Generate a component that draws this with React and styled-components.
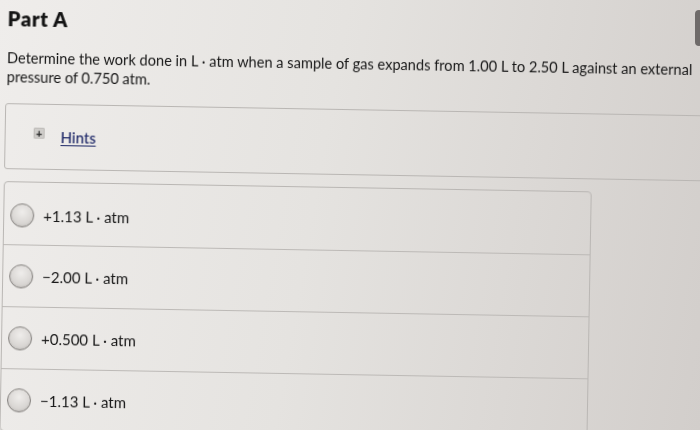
import React from 'react'
import styled, { createGlobalStyle } from 'styled-components'

const GlobalStyle = createGlobalStyle`
  html, body {
    margin: 0;
    height: 100%;
    overflow: hidden;
  }
  body {
    background: linear-gradient(100deg, #efedeb 0%, #e5e3e0 45%, #d2cecb 100%);
    font-family: Lato, "Open Sans", sans-serif;
    color: #1d1d1d;
  }
`

const choices = [
  '+1.13 L · atm',
  '−2.00 L · atm',
  '+0.500 L · atm',
  '−1.13 L · atm',
]

function App() {
  return (
    <>
      <GlobalStyle />
      <Scroll />
      <Page>
        <Title>Part A</Title>
        <Question>
          Determine the work done in L · atm when a sample of gas expands from 1.00 L to 2.50 L against an external
          <br />
          pressure of 0.750 atm.
        </Question>
        <HintBox>
          <PlusIcon>+</PlusIcon>
          <HintLink>Hints</HintLink>
        </HintBox>
        <ChoiceList>
          {choices.map((c, i) => (
            <Choice key={i} $first={i === 0}>
              <Radio />
              <span>{c}</span>
            </Choice>
          ))}
        </ChoiceList>
      </Page>
    </>
  )
}

export default App

// the whole sheet sits at a slight tilt
const Page = styled.div`
  width: 720px;
  padding: 7px 0 0 8px;
  transform: rotate(1deg);
  transform-origin: 0 0;
`

const Scroll = styled.div`
  position: fixed;
  right: -3px;
  top: 10px;
  width: 8px;
  height: 36px;
  border-radius: 4px;
  background: #6f6b6a;
`

const Title = styled.h2`
  margin: 0;
  font-size: 20px;
  font-weight: 800;
  letter-spacing: 0.7px;
  line-height: 22px;
  color: #141414;
`

const Question = styled.p`
  margin: 19px 0 0;
  width: 720px;
  white-space: nowrap;
  font-size: 14.6px;
  line-height: 19px;
  color: #171717;
`

const HintBox = styled.div`
  margin: 17px 0 0 -1px;
  height: 66px;
  width: 720px;
  box-sizing: border-box;
  border: 1px solid #b9b6b3;
  border-radius: 3px;
  display: flex;
  align-items: center;
  padding: 0 0 0 28px;
`

const PlusIcon = styled.span`
  width: 9px;
  height: 9px;
  border-radius: 1px;
  background: #cfcdca;
  border: 1px solid #bdbab7;
  font-size: 11px;
  font-weight: 900;
  line-height: 9px;
  text-align: center;
  color: #2a2a2a;
  margin-top: -8px;
`

const HintLink = styled.a`
  margin-left: 16px;
  font-size: 15px;
  font-weight: 500;
  color: #1b2566;
  text-decoration: underline;
  text-underline-offset: 2px;
`

const ChoiceList = styled.div`
  margin: 12px 0 0 -1px;
  width: 586px;
  border: 1px solid #b9b6b3;
  border-radius: 4px;
`

const Choice = styled.div`
  box-sizing: border-box;
  height: 62px;
  display: flex;
  align-items: center;
  padding: ${p => (p.$first ? '3px' : '0')} 0 0 6px;
  border-top: ${p => (p.$first ? 'none' : '1px solid #bcb9b6')};
  font-size: 15px;
  color: #171717;
  gap: 9px;
`

const Radio = styled.span`
  width: 22px;
  height: 22px;
  border-radius: 50%;
  border: 1px solid #85827f;
  background: radial-gradient(circle at 50% 35%, #efedeb, #d2cfcc 80%);
  box-shadow: inset 0 -1px 2px rgba(0, 0, 0, 0.08);
`
